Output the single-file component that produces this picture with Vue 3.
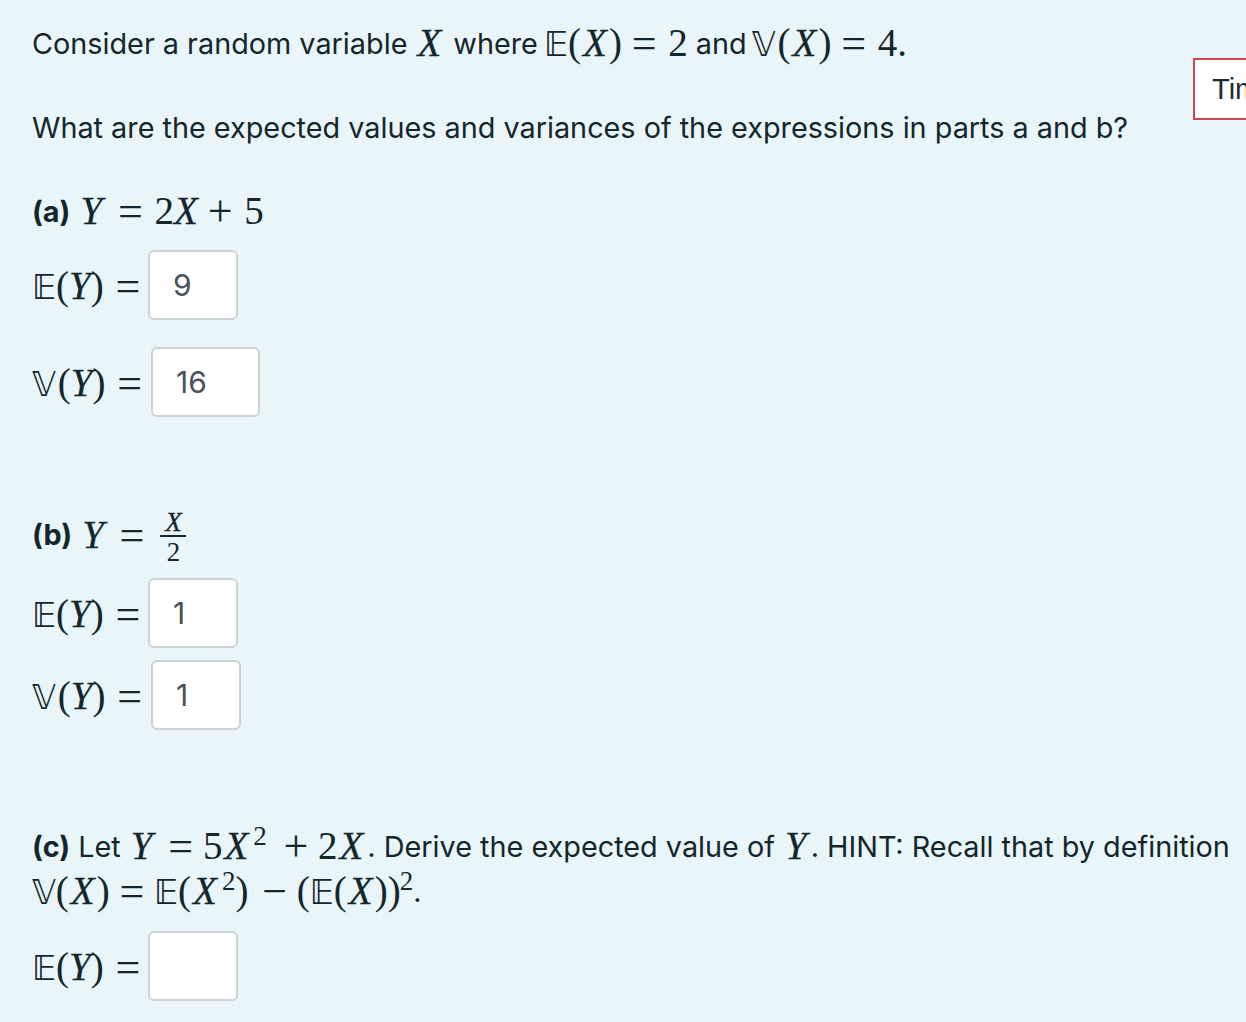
<script setup>
const parts = {
  a: [
    { op: 'E', value: '9', width: 90 },
    { op: 'V', value: '16', width: 109 },
  ],
  b: [
    { op: 'E', value: '1', width: 90 },
    { op: 'V', value: '1', width: 90 },
  ],
}
const sym = { E: '𝔼', V: '𝕍' }
</script>

<template>
  <main class="page">
    <aside class="timer">Timer</aside>

    <p class="line first">
      Consider a random variable&nbsp;<span class="m"><i>X</i></span><span class="after-x">where</span>&nbsp;<span class="m e-math"><span class="bb">𝔼</span>(<i>X</i>) <span class="eq">=</span> 2</span>&nbsp;and&nbsp;<span class="m v-math"><span class="bb">𝕍</span>(<i>X</i>) <span class="eq">=</span> 4.</span>
    </p>
    <p class="line second">What are the expected values and variances of the expressions in parts a and b?</p>

    <p class="line third"><b>(a)</b>&nbsp;<span class="m"><i class="y">Y</i> <span class="eq">=</span> 2<i>X</i> <span class="eq">+</span> 5</span></p>

    <div class="answers a-answers">
      <div v-for="row in parts.a" :key="row.op" class="answer" :class="{ wide: row.op === 'V' }">
        <span class="m label"><span class="bb">{{ sym[row.op] }}</span>(<i>Y</i>) <span class="eq">=</span></span>
        <span class="box" :style="{ width: row.width + 'px' }">{{ row.value }}</span>
      </div>
    </div>

    <p class="line fraction-line">
      <b>(b)</b>&nbsp;<span class="m"><i class="y">Y</i> <span class="eq">=</span></span>
      <span class="frac"><i>X</i><span class="two">2</span></span>
    </p>

    <div class="answers b-answers">
      <div v-for="row in parts.b" :key="row.op" class="answer" :class="{ wide: row.op === 'V' }">
        <span class="m label"><span class="bb">{{ sym[row.op] }}</span>(<i>Y</i>) <span class="eq">=</span></span>
        <span class="box" :style="{ width: row.width + 'px' }">{{ row.value }}</span>
      </div>
    </div>

    <p class="line part-c">
      <b>(c)</b> Let <span class="m"><i class="y">Y</i> <span class="eq">=</span> 5<i>X</i><sup>2</sup> <span class="eq">+</span> 2<i>X</i></span><span class="dot">.</span> Derive the expected value of <span class="m"><i>Y</i></span><span class="dot">.</span> HINT: Recall that by definition
    </p>
    <p class="line part-c2">
      <span class="m"><span class="bb">𝕍</span>(<i>X</i>) <span class="eq">=</span> <span class="bb">𝔼</span>(<i>X</i><sup>2</sup>) <span class="eq minus">−</span> (<span class="bb">𝔼</span>(<i>X</i>))<sup class="tight">2</sup></span>.
    </p>

    <div class="answer last">
      <span class="m label"><span class="bb">𝔼</span>(<i>Y</i>) <span class="eq">=</span></span>
      <span class="box empty"></span>
    </div>
  </main>
</template>

<style>
html, body { margin: 0; background: #e9f5f8; }
</style>

<style scoped>
.page {
  position: relative;
  width: 1246px;
  height: 1022px;
  overflow: hidden;
  box-sizing: border-box;
  padding-left: 32px;
  background: #e9f5f8;
  color: #14262b;
  font-family: Inter, "Liberation Sans", sans-serif;
  font-size: 28.8px;
}
.timer {
  position: absolute;
  left: 1193px;
  top: 58px;
  width: 90px;
  height: 62px;
  box-sizing: border-box;
  border: 2px solid #c9484f;
  background: #fff;
  color: #25282c;
  font-family: "Liberation Sans", sans-serif;
  font-size: 29px;
  line-height: 58px;
  padding-left: 17px;
}
.line {
  margin: 0;
  height: 44px;
  line-height: 44px;
  white-space: nowrap;
}
.first { margin-top: 22px; }
.second { margin-top: 40px; }
.third { margin-top: 40px; }
.third i:not(.y) { padding: 0; }
b { font-weight: 700; }
.after-x { margin-left: 10px; }
.e-math { margin-left: -2px; }
.v-math { margin-left: -3px; }
.v-math .bb { margin-right: 2px; }
.dot { margin-left: 2px; }
.m {
  font-family: "Liberation Serif", serif;
  font-size: 39px;
  line-height: 0;
  vertical-align: -2px;
}
i {
  padding: 0 2px;
  -webkit-text-stroke: 0.3px currentColor;
}
.y { padding-right: 6px; }
.bb {
  font-family: "DejaVu Sans", sans-serif;
  font-size: 33px;
  font-weight: 400;
}
.eq {
  font-size: 44px;
  margin-right: 2px;
  vertical-align: -2px;
}
sup {
  font-size: 27px;
  line-height: 0;
  margin-left: 3px;
}
sup.tight { margin-left: -1px; }
.answers { display: flex; flex-direction: column; }
.a-answers { margin-top: 16px; gap: 27px; }
.answer {
  display: flex;
  align-items: center;
  height: 70px;
}
.label {
  width: 116px;
  padding-top: 4px;
  box-sizing: border-box;
  line-height: 44px;
  white-space: nowrap;
}
.label i { padding: 0; }
.label .eq { margin-left: 2px; }
.wide .label { width: 119px; }
.wide .bb { margin-right: 2px; }
.box {
  display: block;
  box-sizing: border-box;
  height: 70px;
  width: 90px;
  padding-left: 23px;
  border: 2px solid #ccd3d7;
  border-radius: 6px;
  background: #fff;
  color: #4b5157;
  font-size: 30px;
  line-height: 66px;
}
.fraction-line {
  display: flex;
  align-items: center;
  margin-top: 84px;
  height: 68px;
  line-height: 68px;
  white-space: pre;
}
.fraction-line .m { line-height: 44px; }
.frac {
  display: inline-flex;
  flex-direction: column;
  align-items: center;
  width: 26px;
  margin-left: 14px;
  padding-top: 4px;
  font-family: "Liberation Serif", serif;
  font-size: 27px;
  line-height: 26px;
}
.frac i { padding: 0; }
.two {
  width: 100%;
  padding-top: 2px;
  border-top: 2px solid #14262b;
  text-align: center;
}
.b-answers { margin-top: 9px; gap: 12px; }
.part-c { margin-top: 95px; }
.part-c .eq { margin-right: 0; }
.part-c .eq + sup { margin-left: 3px; }
.part-c sup { margin-right: 7px; }
.part-c2 { margin-top: 1px; }
.part-c2 .eq { margin-right: 0; }
.part-c2 .minus { margin-left: 4px; }
.last { margin-top: 17px; }
</style>
